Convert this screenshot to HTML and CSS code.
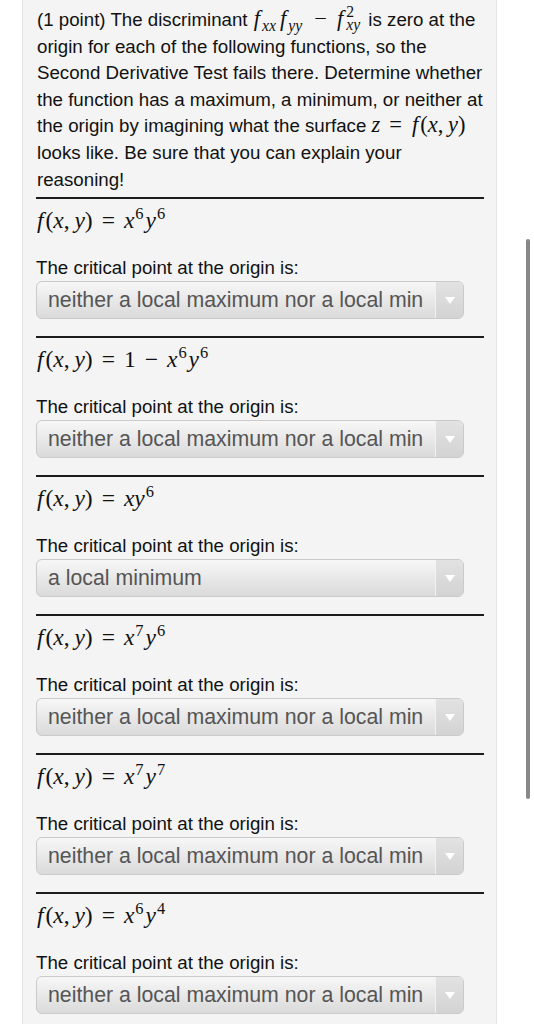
FILE: index.html
```html
<!DOCTYPE HTML>
<html lang="en">
  <head>
    <title>Second Derivative Test</title>
    <meta charset="utf-8">
    <link rel="stylesheet" href="styles.css">
  </head>
  <body>

  <div class="problem">
    <p class="intro">(1 point) The discriminant <span class="m"><i class="f">f</i><sub><i>xx</i></sub><i class="f">f</i><sub><i>yy</i></sub><span class="op">&minus;</span><i class="f">f</i><span class="ss"><span>2</span><span><i>xy</i></span></span></span> is zero at the origin for each of the following functions, so the Second Derivative Test fails there. Determine whether the function has a maximum, a minimum, or neither at the origin by imagining what the surface <span class="m"><i>z</i><span class="op">=</span><i class="f">f</i>(<i>x</i>,&thinsp;<i>y</i>)</span> looks like. Be sure that you can explain your reasoning!</p>

    <div class="part">
      <div class="formula"><i class="f">f</i>(<i>x</i>,&thinsp;<i>y</i>)<span class="op">=</span><i>x</i><sup>6</sup><i>y</i><sup>6</sup></div>
      <div class="label">The critical point at the origin is:</div>
      <div class="select"><span class="value">neither a local maximum nor a local min</span><span class="arrow"></span></div>
    </div>

    <div class="part">
      <div class="formula"><i class="f">f</i>(<i>x</i>,&thinsp;<i>y</i>)<span class="op">=</span>1<span class="op">&minus;</span><i>x</i><sup>6</sup><i>y</i><sup>6</sup></div>
      <div class="label">The critical point at the origin is:</div>
      <div class="select"><span class="value">neither a local maximum nor a local min</span><span class="arrow"></span></div>
    </div>

    <div class="part">
      <div class="formula"><i class="f">f</i>(<i>x</i>,&thinsp;<i>y</i>)<span class="op">=</span><i>xy</i><sup>6</sup></div>
      <div class="label">The critical point at the origin is:</div>
      <div class="select"><span class="value">a local minimum</span><span class="arrow"></span></div>
    </div>

    <div class="part">
      <div class="formula"><i class="f">f</i>(<i>x</i>,&thinsp;<i>y</i>)<span class="op">=</span><i>x</i><sup>7</sup><i>y</i><sup>6</sup></div>
      <div class="label">The critical point at the origin is:</div>
      <div class="select"><span class="value">neither a local maximum nor a local min</span><span class="arrow"></span></div>
    </div>

    <div class="part">
      <div class="formula"><i class="f">f</i>(<i>x</i>,&thinsp;<i>y</i>)<span class="op">=</span><i>x</i><sup>7</sup><i>y</i><sup>7</sup></div>
      <div class="label">The critical point at the origin is:</div>
      <div class="select"><span class="value">neither a local maximum nor a local min</span><span class="arrow"></span></div>
    </div>

    <div class="part">
      <div class="formula"><i class="f">f</i>(<i>x</i>,&thinsp;<i>y</i>)<span class="op">=</span><i>x</i><sup>6</sup><i>y</i><sup>4</sup></div>
      <div class="label">The critical point at the origin is:</div>
      <div class="select"><span class="value">neither a local maximum nor a local min</span><span class="arrow"></span></div>
    </div>
  </div>

  <div class="scrollbar"></div>

  </body>
</html>
```

FILE: styles.css
```css
body {
  margin: 0;
  padding: 0;
  background: #ffffff;
  color: #111;
  font-family: "Liberation Sans", Arial, sans-serif;
  font-size: 18.7px;
}
.problem {
  margin-left: 22px;
  width: 475px;
  box-sizing: border-box;
  padding: 7px 12px 0 13px;
  background-color: #f4f4f4;
  border-left: 1px solid #e4e4e4;
  border-right: 1px solid #e4e4e4;
  height: 1100px;
}
.intro {
  margin: 0 0 4px 1px;
  line-height: 26.6px;
}
.m, .formula {
  font-family: "Liberation Serif", "Times New Roman", serif;
  font-size: 22.5px;
}
.formula {
  font-size: 23.5px;
}
.m {
  line-height: 0;
}
.f {
  margin: 0 2px 0 1px;
}
.op {
  margin: 0 9px;
  font-style: normal;
}
sub, sup {
  font-size: 70%;
  line-height: 0;
  position: relative;
  vertical-align: baseline;
}
sub {
  top: 0.3em;
  margin-right: 3px;
}
sup {
  top: -0.55em;
  margin: 0 2px 0 1px;
}
.ss {
  display: inline-flex;
  flex-direction: column;
  align-items: flex-start;
  vertical-align: 9px;
  font-size: 70%;
  line-height: 13px;
  margin: -14px 3px -14px 1px;
}
.part {
  border-top: 2px solid #1c1c1c;
  padding: 6px 0 17px;
}
.formula {
  line-height: 30px;
  margin-bottom: 20px;
}
.label {
  line-height: 26px;
}
.select {
  display: flex;
  width: 428px;
  height: 38px;
  box-sizing: border-box;
  border: 1px solid #cacaca;
  border-radius: 6px;
  background: linear-gradient(#f7f7f7, #dadada);
  color: #555;
  font-size: 21.3px;
  overflow: hidden;
}
.value {
  flex: 1;
  padding-left: 11px;
  line-height: 36px;
  white-space: nowrap;
  overflow: hidden;
}
.arrow {
  width: 27px;
  border-left: 1px solid #f2f2f2;
  background: linear-gradient(#e2e2e2, #d3d3d3);
  display: flex;
  align-items: center;
  justify-content: center;
}
.arrow::after {
  content: "";
  border-left: 5px solid transparent;
  border-right: 5px solid transparent;
  border-top: 7px solid #fff;
}
.scrollbar {
  position: fixed;
  top: 239px;
  right: 4px;
  width: 4px;
  height: 560px;
  border-radius: 2px;
  background-color: #888;
}
```
